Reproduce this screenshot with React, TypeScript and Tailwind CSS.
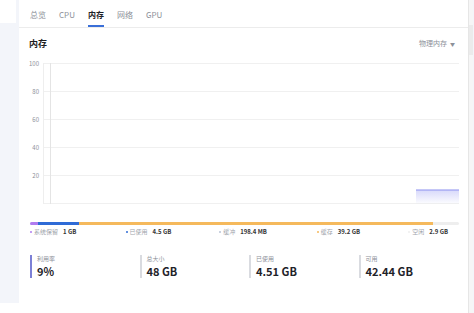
import React from "react";

const F = { fontFamily: '"Noto Sans CJK SC", "Noto Sans", sans-serif' };

const tabs = ["总览", "CPU", "内存", "网络", "GPU"];

const legend = [
  { c: "bg-[#b07cf0]", l: "系统保留", v: "1 GB", w: "w-[96px]" },
  { c: "bg-[#2f6bd6]", l: "已使用", v: "4.5 GB", w: "w-[94px]" },
  { c: "bg-[#b9c3d6]", l: "缓冲", v: "198.4 MB", w: "w-[98px]" },
  { c: "bg-[#f5b95c]", l: "缓存", v: "39.2 GB", w: "w-[92px]" },
  { c: "bg-[#eeeeee]", l: "空闲", v: "2.9 GB", w: "w-[60px]" },
];

const stats = [
  { l: "利用率", v: "9%", b: "border-[#7c80d6]" },
  { l: "总大小", v: "48 GB", b: "border-[#d9dbe0]" },
  { l: "已使用", v: "4.51 GB", b: "border-[#d9dbe0]" },
  { l: "可用", v: "42.44 GB", b: "border-[#d9dbe0]" },
];

export default function App() {
  const grid = [100, 80, 60, 40, 20, 0];
  return (
    <div className="w-[474px] h-[313px] flex bg-[#f3f5fa] overflow-hidden" style={F}>
      <div className="w-[19px] h-full flex flex-col">
        <div className="w-[16px] h-[23px] bg-white" />
        <div className="flex-1" />
        <div className="h-[10px] bg-white" />
      </div>
      <div className="w-[450px] h-full bg-white border-r border-[#e6e6e6] flex flex-col">
        <div className="h-[28px] border-b border-[#ececec] flex pl-[11px] gap-[13px]">
          {tabs.map((t, i) => (
            <div key={t} className="relative h-full flex items-center pt-[3px]">
              <span
                className={
                  i === 2
                    ? "text-[8px] leading-none text-[#1f2329] font-bold"
                    : "text-[8px] leading-none text-[#8c9099]"
                }
              >
                {t}
              </span>
              {i === 2 && <div className="absolute left-0 right-0 bottom-[0px] h-[2px] bg-[#3a6fd8]" />}
            </div>
          ))}
        </div>
        <div className="h-[30px] flex items-center justify-between pl-[10px] pr-[13px]">
          <span className="text-[9px] font-bold text-[#1f1f1f] leading-none">内存</span>
          <span className="text-[7px] text-[#8c9099] leading-none flex items-center gap-[3px]">
            物理内存<span className="text-[5px]">▼</span>
          </span>
        </div>
        <svg width="450" height="150" className="block">
          <defs>
            <linearGradient id="g" x1="0" y1="0" x2="0" y2="1">
              <stop offset="0" stopColor="#8f93f2" stopOpacity="0.35" />
              <stop offset="1" stopColor="#8f93f2" stopOpacity="0.03" />
            </linearGradient>
          </defs>
          {grid.map((g, i) => {
            const y = 5.5 + i * 28;
            return (
              <g key={g}>
                <line x1="24" x2="440" y1={y} y2={y} stroke="#f0f0f0" strokeWidth="1" />
                {g > 0 && (
                  <text x="20" y={y + 2} textAnchor="end" fontSize="6" fill="#8c9099" style={F}>
                    {g}
                  </text>
                )}
              </g>
            );
          })}
          <line x1="24.5" x2="24.5" y1="5" y2="146" stroke="#eeeeee" />
          <line x1="31.5" x2="31.5" y1="5" y2="146" stroke="#e4e4e4" />
          <path d="M397 132 L440 132 L440 145.5 L397 145.5 Z" fill="url(#g)" />
          <line x1="397" x2="440" y1="132" y2="132" stroke="#8b8ff0" strokeWidth="1.2" />
        </svg>
        <div className="mt-[14px] ml-[11px] w-[429px] h-[3px] rounded-full overflow-hidden flex bg-[#eeeeee]">
          <div className="w-[8px] bg-[#b07cf0]" />
          <div className="w-[41px] bg-[#2f6bd6]" />
          <div className="w-[354px] bg-[#f5b95c]" />
        </div>
        <div className="h-[14px] ml-[11px] flex items-center">
          {legend.map((it) => (
            <div key={it.l} className={`${it.w} flex items-center text-[6px] leading-none`}>
              <span className={`w-[2px] h-[2px] rounded-full ${it.c} mr-[2px]`} />
              <span className="text-[#a0a4ab]">{it.l}</span>
              <span className="ml-[5px] font-bold text-[#333]">{it.v}</span>
            </div>
          ))}
        </div>
        <div className="mt-[16px] ml-[11px] flex">
          {stats.map((s) => (
            <div key={s.l} className={`w-[112px] h-[23px] border-l-2 ${s.b} pl-[5px] flex flex-col justify-center`}>
              <span className="text-[6px] leading-none text-[#8c9099]">{s.l}</span>
              <span className="mt-[4px] text-[11px] leading-none font-bold text-[#1f2329]">{s.v}</span>
            </div>
          ))}
        </div>
      </div>
      <div className="w-[4px] h-full bg-[#f6f6f6] flex flex-col">
        <div className="h-[25px]" />
        <div className="h-[30px] bg-[#ebebeb]" />
      </div>
    </div>
  );
}
